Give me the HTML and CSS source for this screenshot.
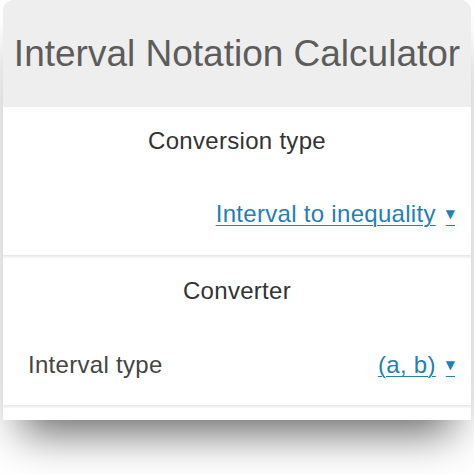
FILE: index.html
```html
<!DOCTYPE html>
<html lang="en">
<head>
<meta charset="utf-8">
<title>Interval Notation Calculator</title>
<link rel="stylesheet" href="styles.css">
</head>
<body>
<div class="widget">
  <header class="header">
    <h1 class="title">Interval Notation Calculator</h1>
  </header>
  <section class="card card-first">
    <h2 class="card-title">Conversion type</h2>
    <div class="row row-end">
      <a class="select" href="#">Interval to inequality<span class="caret">▼</span></a>
    </div>
  </section>
  <section class="card card-second">
    <h2 class="card-title">Converter</h2>
    <div class="row">
      <span class="label">Interval type</span>
      <a class="select" href="#">(a, b)<span class="caret">▼</span></a>
    </div>
  </section>
  <section class="card card-stub"></section>
</div>
</body>
</html>
```

FILE: styles.css
```css
html, body {
  margin: 0;
  padding: 0;
  background: #ffffff;
}

body {
  font-family: "Liberation Sans", Arial, Helvetica, sans-serif;
  width: 474px;
  height: 474px;
  overflow: hidden;
}

.widget {
  margin: 0 3px;
  height: 420px;
  background: #f6f6f6;
  border-radius: 11px 11px 0 0;
  box-shadow: 0 30px 42px -18px rgba(0, 0, 0, 0.62);
  display: flex;
  flex-direction: column;
  gap: 3px;
  overflow: hidden;
}

.header {
  flex: 0 0 107px;
  margin-bottom: -3px;
  background: #eeeeee;
  display: flex;
  align-items: center;
  justify-content: center;
}

.title {
  margin: 0;
  font-weight: normal;
  font-size: 37px;
  color: #5c5c5c;
}

.card {
  flex-shrink: 0;
  background: #ffffff;
  box-shadow: 0 1px 2px rgba(0, 0, 0, 0.08);
  display: flex;
  flex-direction: column;
}

.card-first {
  padding: 20px 0 27px;
  gap: 45px;
}

.card-second {
  padding: 19px 0 26px;
  gap: 46px;
}

.card-title {
  margin: 0;
  font-weight: normal;
  font-size: 24px;
  line-height: 28px;
  letter-spacing: 0.3px;
  color: #333333;
  text-align: center;
}

.row {
  display: flex;
  justify-content: space-between;
  align-items: baseline;
  padding: 0 13px 0 25px;
  font-size: 24px;
  line-height: 28px;
  letter-spacing: 0.3px;
}

.row-end {
  justify-content: flex-end;
}

.label {
  color: #444444;
}

.select {
  color: #1f80b6;
  text-decoration: underline;
  text-decoration-thickness: 1px;
  text-underline-offset: 3px;
}

.caret {
  font-family: "DejaVu Sans", sans-serif;
  font-size: 12px;
  letter-spacing: 0;
  padding-left: 10px;
  padding-right: 3px;
  vertical-align: 4px;
}

.card-stub {
  flex: 1 1 auto;
  min-height: 0;
  box-shadow: none;
}
```
